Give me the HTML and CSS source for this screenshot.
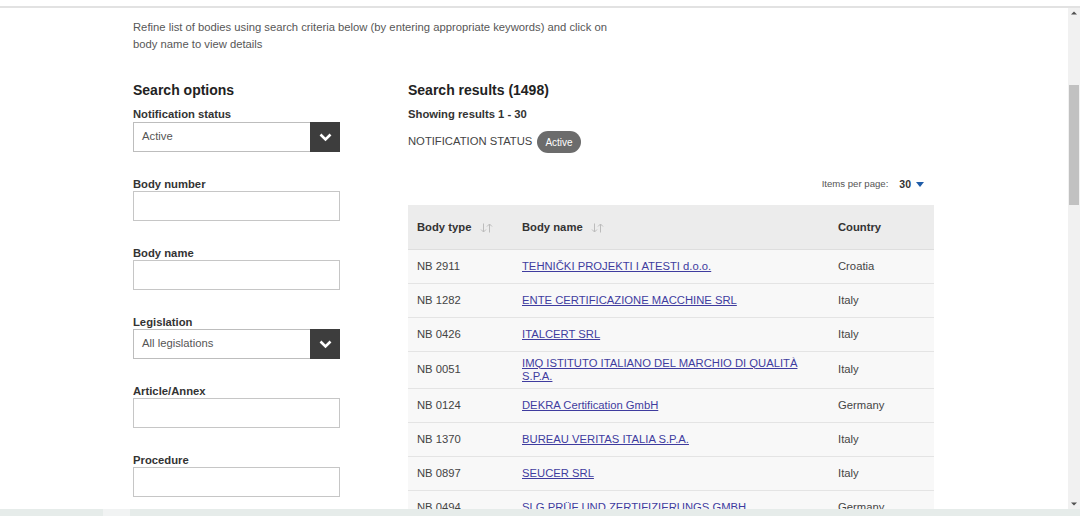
FILE: index.html
```html
<!DOCTYPE html>
<html lang="en">
<head>
<meta charset="utf-8">
<title>Bodies search</title>
<link rel="stylesheet" href="styles.css">
</head>
<body>
<div class="window">
  <div class="topbar"></div>
  <div class="viewport">
    <div class="page">
      <div class="content">
        <p class="intro">Refine list of bodies using search criteria below (by entering appropriate keywords) and click on<br>body name to view details</p>
        <div class="columns">
          <aside class="options">
            <h2 class="heading">Search options</h2>
            <div class="field">
              <label class="label">Notification status</label>
              <div class="select"><span class="select-text">Active</span><span class="select-btn"><svg width="13" height="9" viewBox="0 0 13 9"><path d="M1.5 1.5 L6.5 6.5 L11.5 1.5" fill="none" stroke="#fff" stroke-width="2.6"/></svg></span></div>
            </div>
            <div class="field">
              <label class="label">Body number</label>
              <div class="input"></div>
            </div>
            <div class="field">
              <label class="label">Body name</label>
              <div class="input"></div>
            </div>
            <div class="field">
              <label class="label">Legislation</label>
              <div class="select"><span class="select-text">All legislations</span><span class="select-btn"><svg width="13" height="9" viewBox="0 0 13 9"><path d="M1.5 1.5 L6.5 6.5 L11.5 1.5" fill="none" stroke="#fff" stroke-width="2.6"/></svg></span></div>
            </div>
            <div class="field">
              <label class="label">Article/Annex</label>
              <div class="input"></div>
            </div>
            <div class="field">
              <label class="label">Procedure</label>
              <div class="input"></div>
            </div>
          </aside>
          <section class="results">
            <h2 class="heading">Search results (1498)</h2>
            <div class="showing">Showing results 1 - 30</div>
            <div class="filter"><span>NOTIFICATION STATUS</span><span class="pill">Active</span></div>
            <div class="perpage"><span>Items per page:</span><b>30</b><svg width="8" height="5" viewBox="0 0 8 5"><path d="M0 0 H8 L4 5 Z" fill="#1f5ca8"/></svg></div>
            <table class="table">
              <thead>
                <tr>
                  <th class="c-type">Body type <svg class="sort" width="13" height="10" viewBox="0 0 13 10"><path d="M3.5 0.5 V9 M1 6.5 L3.5 9 L6 6.5 M9.5 9.5 V1 M7 3.5 L9.5 1 L12 3.5" fill="none" stroke="#bcbcbc" stroke-width="1"/></svg></th>
                  <th class="c-name">Body name <svg class="sort" width="13" height="10" viewBox="0 0 13 10"><path d="M3.5 0.5 V9 M1 6.5 L3.5 9 L6 6.5 M9.5 9.5 V1 M7 3.5 L9.5 1 L12 3.5" fill="none" stroke="#bcbcbc" stroke-width="1"/></svg></th>
                  <th class="c-country">Country</th>
                </tr>
              </thead>
              <tbody>
                <tr><td>NB 2911</td><td><a href="#">TEHNIČKI PROJEKTI I ATESTI d.o.o.</a></td><td>Croatia</td></tr>
                <tr><td>NB 1282</td><td><a href="#">ENTE CERTIFICAZIONE MACCHINE SRL</a></td><td>Italy</td></tr>
                <tr><td>NB 0426</td><td><a href="#">ITALCERT SRL</a></td><td>Italy</td></tr>
                <tr class="tall"><td>NB 0051</td><td><a href="#">IMQ ISTITUTO ITALIANO DEL MARCHIO DI QUALITÀ S.P.A.</a></td><td>Italy</td></tr>
                <tr><td>NB 0124</td><td><a href="#">DEKRA Certification GmbH</a></td><td>Germany</td></tr>
                <tr><td>NB 1370</td><td><a href="#">BUREAU VERITAS ITALIA S.P.A.</a></td><td>Italy</td></tr>
                <tr><td>NB 0897</td><td><a href="#">SEUCER SRL</a></td><td>Italy</td></tr>
                <tr><td>NB 0494</td><td><a href="#">SLG PRÜF UND ZERTIFIZIERUNGS GMBH</a></td><td>Germany</td></tr>
              </tbody>
            </table>
          </section>
        </div>
      </div>
    </div>
    <div class="scrollbar">
      <svg class="arrow" width="12" height="10" viewBox="0 0 12 10"><path d="M3 6.5 H9 L6 3.5 Z" fill="#505050"/></svg>
      <div class="track"><div class="thumb"></div></div>
      <svg class="arrow" width="12" height="10" viewBox="0 0 12 10"><path d="M3 3.5 H9 L6 6.5 Z" fill="#505050"/></svg>
    </div>
  </div>
  <div class="bottombar"><span class="seg"></span></div>
</div>
</body>
</html>
```

FILE: styles.css
```css
* { box-sizing: border-box; }
html, body { margin: 0; padding: 0; }
body {
  width: 1080px;
  height: 516px;
  overflow: hidden;
  background: #fff;
  font-family: "Liberation Sans", Arial, sans-serif;
  color: #444;
}
.window {
  display: flex;
  flex-direction: column;
  height: 516px;
}
.topbar {
  height: 8px;
  flex: none;
  border-bottom: 2px solid #e2e2e2;
}
.viewport {
  flex: 1;
  display: flex;
  min-height: 0;
  overflow: hidden;
}
.page {
  flex: 1;
  min-width: 0;
  overflow: hidden;
}
.content {
  width: 802px;
  margin: 0 auto;
  padding-top: 11px;
}
.intro {
  margin: 0;
  font-size: 11.25px;
  line-height: 17px;
  color: #575757;
}
.columns {
  display: flex;
  gap: 68px;
  margin-top: 29px;
}
.options {
  width: 207px;
  flex: none;
}
.results {
  width: 526px;
  flex: none;
}
.heading {
  margin: 0;
  font-size: 14px;
  line-height: 17px;
  font-weight: bold;
  color: #222;
}
.options .heading { margin-bottom: 8px; }
.field { margin-bottom: 24px; }
.label {
  display: block;
  font-size: 11.25px;
  line-height: 14px;
  font-weight: bold;
  color: #333;
  margin-bottom: 1px;
}
.field + .field .label { padding-top: 1px; margin-bottom: 0; }
.input {
  height: 30px;
  border: 1px solid #c6c6c6;
  background: #fff;
}
.select {
  height: 30px;
  display: flex;
  border: 1px solid #bdbdbd;
  background: #fff;
}
.select-text {
  flex: 1;
  display: flex;
  align-items: center;
  padding-left: 8px;
  font-size: 11.25px;
  color: #555;
  margin-top: -2px;
}
.select-btn {
  width: 30px;
  margin: -1px -1px -1px 0;
  background: #3d3d3d;
  display: flex;
  align-items: center;
  justify-content: center;
}
.showing {
  margin-top: 8px;
  font-size: 11.25px;
  line-height: 14px;
  font-weight: bold;
  color: #333;
}
.filter {
  margin-top: 10px;
  display: flex;
  align-items: center;
  gap: 5px;
  font-size: 11.25px;
  color: #444;
}
.filter > span:first-child { margin-top: -3px; }
.pill {
  height: 22px;
  padding: 0 8px;
  border-radius: 11px;
  background: #6c6c6c;
  color: #fff;
  font-size: 10px;
  display: inline-flex;
  align-items: center;
}
.perpage {
  margin-top: 25px;
  display: flex;
  justify-content: flex-end;
  align-items: center;
  gap: 4px;
  padding-right: 10px;
  font-size: 9.6px;
  line-height: 12px;
  color: #555;
}
.perpage b { margin-left: 7px; color: #333; font-size: 10.5px; }
.perpage svg { margin-left: 1px; }
.table {
  margin-top: 15px;
  width: 100%;
  border-collapse: collapse;
  table-layout: fixed;
  font-size: 11.25px;
  color: #444;
}
.table th {
  height: 44px;
  background: #ececec;
  text-align: left;
  font-weight: bold;
  color: #333;
  padding: 0 9px;
  vertical-align: middle;
  border-bottom: 1px solid #dedede;
}
.c-type { width: 105px; }
.c-name { width: 316px; }
.sort { margin-left: 5px; vertical-align: -2px; }
.table td {
  height: 34px;
  padding: 0 9px;
  background: #f8f8f8;
  border-top: 1px solid #e4e4e4;
  vertical-align: middle;
  line-height: 13px;
}
.table tr.tall td { height: 37px; }
.table a {
  color: #3f3c9f;
  text-decoration: underline;
}
.scrollbar {
  width: 12px;
  flex: none;
  background: #f1f1f1;
  display: flex;
  flex-direction: column;
  align-items: center;
}
.arrow { flex: none; }
.track {
  flex: 1;
  width: 100%;
  padding: 67px 1px 0;
}
.thumb {
  height: 120px;
  background: #c1c1c1;
}
.bottombar {
  height: 7px;
  flex: none;
  background: #e6ecea;
  padding-left: 103px;
}
.seg {
  display: block;
  width: 27px;
  height: 7px;
  background: #f1f3f3;
}
```
